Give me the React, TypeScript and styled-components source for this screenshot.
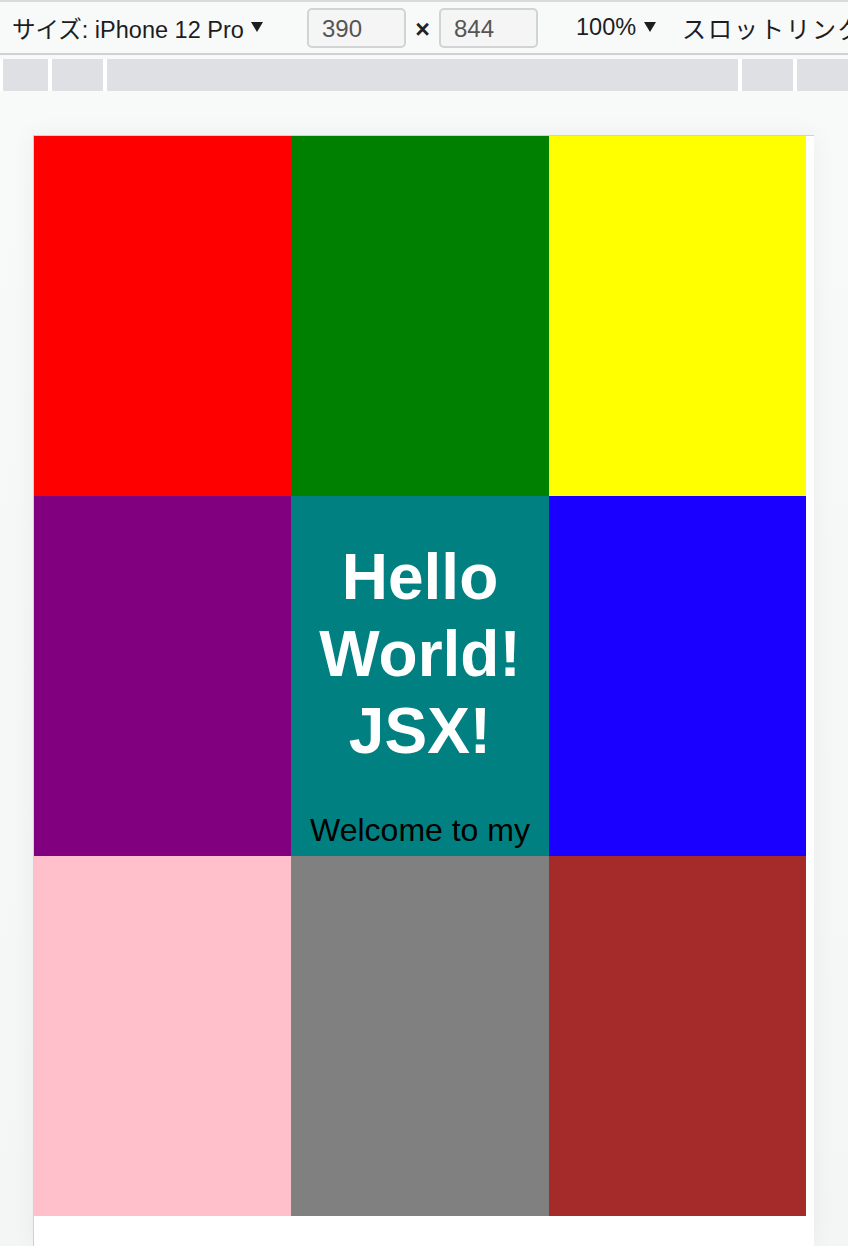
import React from "react";
import styled, { createGlobalStyle } from "styled-components";

const Global = createGlobalStyle`
  html, body { margin: 0; padding: 0; }
  body {
    width: 848px;
    height: 1246px;
    overflow: hidden;
    background: #f6f7f7;
    font-family: "Liberation Sans", "Noto Sans CJK JP", sans-serif;
  }
  * { box-sizing: border-box; }
`;

const Page = styled.div`
  display: flex;
  flex-direction: column;
  width: 848px;
  height: 1246px;
`;

const Toolbar = styled.div`
  display: flex;
  align-items: center;
  height: 55px;
  padding: 0 0 0 12px;
  background: #f8f9f9;
  border-top: 2px solid #d8dadc;
  border-bottom: 2px solid #cfd1d3;
  color: #1d1d1f;
  font-size: 23.5px;
  white-space: nowrap;
  overflow: hidden;
`;

const SizeLabel = styled.div`
  display: flex;
  align-items: center;
  flex: 0 0 295px;
  gap: 7px;
`;

const Caret = styled.span`
  display: inline-block;
  width: 0;
  height: 0;
  border-left: 6px solid transparent;
  border-right: 6px solid transparent;
  border-top: 10px solid #1d1d1f;
  margin-top: -2px;
`;

const DimInput = styled.div`
  flex: 0 0 99px;
  height: 40px;
  display: flex;
  align-items: center;
  padding: 2px 0 0 13px;
  border: 2px solid #d2d3d4;
  border-radius: 5px;
  background: #f5f5f5;
  color: #555;
  font-size: 24px;
`;

const Times = styled.span`
  flex: 0 0 33px;
  text-align: center;
  font-size: 25px;
  font-weight: bold;
  color: #222;
  margin-top: 4px;
`;

const Zoom = styled.div`
  display: flex;
  align-items: center;
  gap: 8px;
  margin-left: 38px;
  flex: 0 0 auto;
`;

const Throttle = styled.div`
  margin-left: 26px;
  font-size: 24px;
  letter-spacing: 2px;
`;

const Gap = styled.div`
  height: 4px;
  background: #f8f9f9;
`;

const Ruler = styled.div`
  display: flex;
  gap: 4px;
  height: 32px;
  padding-left: 3px;
  background: #ffffff;
`;

const RulerSeg = styled.div<{ $w?: number }>`
  background: #dfe0e3;
  ${(p) => (p.$w ? `flex: 0 0 ${p.$w}px;` : "flex: 1;")}
`;

const Stage = styled.div`
  flex: 1;
  padding: 44px 0 0 33px;
  background: linear-gradient(180deg, #f8f9f9 0%, #f4f6f5 100%);
  overflow: hidden;
`;

const Device = styled.div`
  width: 781px;
  height: 100%;
  background: #ffffff;
  border-top: 1px solid #cfd1d3;
  border-left: 1px solid #cfd1d3;
  box-shadow: 0 0 24px rgba(0, 0, 0, 0.05);
`;

const Grid = styled.div`
  display: grid;
  width: 772px;
  grid-template-columns: 257px 258px 257px;
  grid-template-rows: repeat(3, 360px);
`;

const Cell = styled.div<{ $bg: string }>`
  background: ${(p) => p.$bg};
  overflow: hidden;
  text-align: center;
`;

const Heading = styled.h1`
  margin: 43px 0;
  color: #ffffff;
  font-size: 64px;
  line-height: 1.2;
  font-weight: bold;
`;

const Text = styled.p`
  margin: 32px 0 0;
  color: #000000;
  font-size: 32px;
  line-height: 1.15;
`;

const colors = [
  "#ff0000",
  "#008000",
  "#ffff00",
  "#800080",
  "#008080",
  "#1a00ff",
  "#ffc0cb",
  "#808080",
  "#a52a2a",
];

export default function App() {
  return (
    <Page>
      <Global />
      <Toolbar>
        <SizeLabel>
          <span>サイズ: iPhone 12 Pro</span>
          <Caret />
        </SizeLabel>
        <DimInput>390</DimInput>
        <Times>×</Times>
        <DimInput>844</DimInput>
        <Zoom>
          <span>100%</span>
          <Caret />
        </Zoom>
        <Throttle>スロットリング</Throttle>
      </Toolbar>
      <Gap />
      <Ruler>
        <RulerSeg $w={45} />
        <RulerSeg $w={51} />
        <RulerSeg $w={631} />
        <RulerSeg $w={51} />
        <RulerSeg />
      </Ruler>
      <Stage>
        <Device>
          <Grid>
            {colors.map((c, i) => (
              <Cell key={i} $bg={c}>
                {i === 4 && (
                  <>
                    <Heading>
                      Hello
                      <br />
                      World!
                      <br />
                      JSX!
                    </Heading>
                    <Text>Welcome to my</Text>
                  </>
                )}
              </Cell>
            ))}
          </Grid>
        </Device>
      </Stage>
    </Page>
  );
}
